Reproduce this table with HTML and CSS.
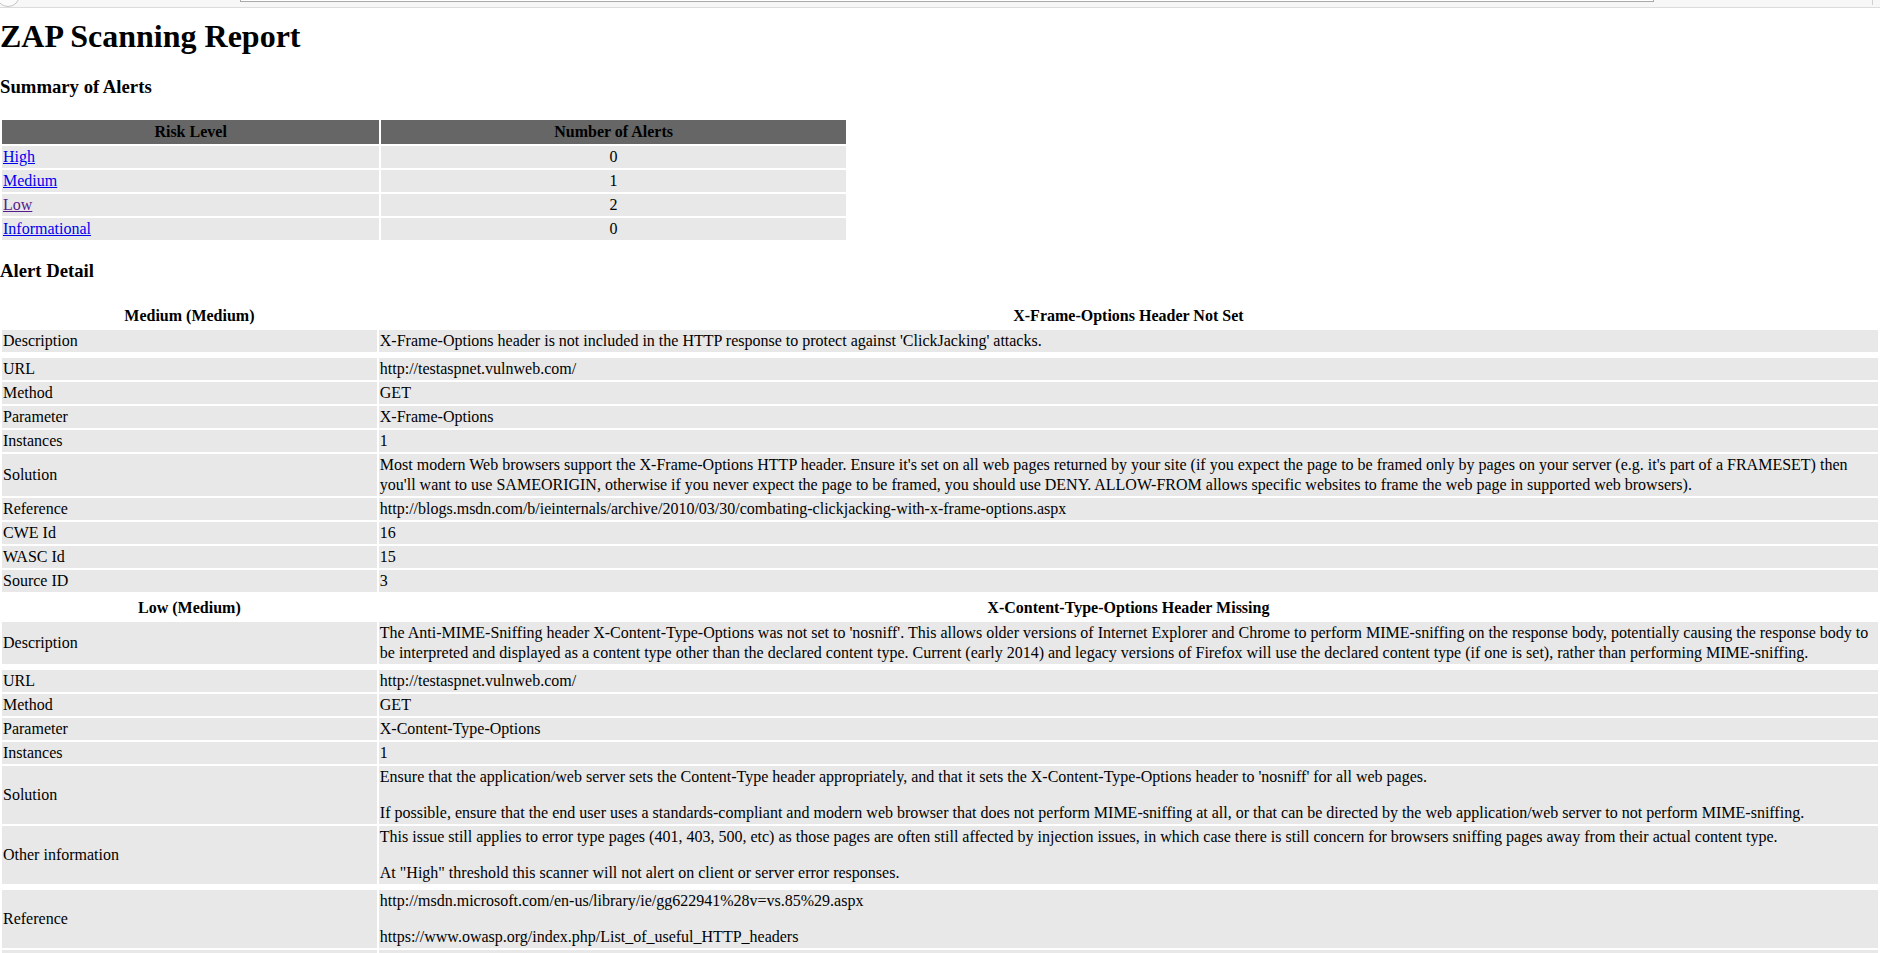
FILE: index.html
```html
<!DOCTYPE html>
<html>
<head>
<meta charset="utf-8">
<title>ZAP Scanning Report</title>
<link rel="stylesheet" href="styles.css">
</head>
<body>
<div class="chrome">
  <span class="chrome-btn"></span>
  <span class="chrome-addr"></span>
  <span class="chrome-sep"></span>
</div>
<div class="report">
  <h1 class="title">ZAP Scanning Report</h1>
  <h3 class="section">Summary of Alerts</h3>
  <table class="summary">
    <tr>
      <th class="summary-head col-risk">Risk Level</th>
      <th class="summary-head col-count">Number of Alerts</th>
    </tr>
    <tr class="row"><td class="cell"><a class="link" href="#high">High</a></td><td class="cell center">0</td></tr>
    <tr class="row"><td class="cell"><a class="link" href="#medium">Medium</a></td><td class="cell center">1</td></tr>
    <tr class="row"><td class="cell"><a class="link visited" href="#low">Low</a></td><td class="cell center">2</td></tr>
    <tr class="row"><td class="cell"><a class="link" href="#info">Informational</a></td><td class="cell center">0</td></tr>
  </table>
  <h3 class="section detail-title">Alert Detail</h3>

  <table class="results">
    <tr>
      <th class="risk-head col-label"><a id="medium"></a>Medium (Medium)</th>
      <th class="risk-head">X-Frame-Options Header Not Set</th>
    </tr>
    <tr class="row"><td class="cell">Description</td><td class="cell"><p class="p">X-Frame-Options header is not included in the HTTP response to protect against 'ClickJacking' attacks.</p></td></tr>
    <tr><td class="cell" colspan="2"></td></tr>
    <tr class="row"><td class="cell">URL</td><td class="cell">http://testaspnet.vulnweb.com/</td></tr>
    <tr class="row"><td class="cell">Method</td><td class="cell">GET</td></tr>
    <tr class="row"><td class="cell">Parameter</td><td class="cell">X-Frame-Options</td></tr>
    <tr class="row"><td class="cell">Instances</td><td class="cell">1</td></tr>
    <tr class="row"><td class="cell">Solution</td><td class="cell"><p class="p">Most modern Web browsers support the X-Frame-Options HTTP header. Ensure it's set on all web pages returned by your site (if you expect the page to be framed only by pages on your server (e.g. it's part of a FRAMESET) then you'll want to use SAMEORIGIN, otherwise if you never expect the page to be framed, you should use DENY. ALLOW-FROM allows specific websites to frame the web page in supported web browsers).</p></td></tr>
    <tr class="row"><td class="cell">Reference</td><td class="cell"><p class="p">http://blogs.msdn.com/b/ieinternals/archive/2010/03/30/combating-clickjacking-with-x-frame-options.aspx</p></td></tr>
    <tr class="row"><td class="cell">CWE Id</td><td class="cell">16</td></tr>
    <tr class="row"><td class="cell">WASC Id</td><td class="cell">15</td></tr>
    <tr class="row"><td class="cell">Source ID</td><td class="cell">3</td></tr>
  </table>

  <table class="results">
    <tr>
      <th class="risk-head col-label"><a id="low"></a>Low (Medium)</th>
      <th class="risk-head">X-Content-Type-Options Header Missing</th>
    </tr>
    <tr class="row"><td class="cell">Description</td><td class="cell"><p class="p">The Anti-MIME-Sniffing header X-Content-Type-Options was not set to 'nosniff'. This allows older versions of Internet Explorer and Chrome to perform MIME-sniffing on the response body, potentially causing the response body to be interpreted and displayed as a content type other than the declared content type. Current (early 2014) and legacy versions of Firefox will use the declared content type (if one is set), rather than performing MIME-sniffing.</p></td></tr>
    <tr><td class="cell" colspan="2"></td></tr>
    <tr class="row"><td class="cell">URL</td><td class="cell">http://testaspnet.vulnweb.com/</td></tr>
    <tr class="row"><td class="cell">Method</td><td class="cell">GET</td></tr>
    <tr class="row"><td class="cell">Parameter</td><td class="cell">X-Content-Type-Options</td></tr>
    <tr class="row"><td class="cell">Instances</td><td class="cell">1</td></tr>
    <tr class="row"><td class="cell">Solution</td><td class="cell"><p class="p">Ensure that the application/web server sets the Content-Type header appropriately, and that it sets the X-Content-Type-Options header to 'nosniff' for all web pages.</p><p class="p">If possible, ensure that the end user uses a standards-compliant and modern web browser that does not perform MIME-sniffing at all, or that can be directed by the web application/web server to not perform MIME-sniffing.</p></td></tr>
    <tr class="row"><td class="cell">Other information</td><td class="cell"><p class="p">This issue still applies to error type pages (401, 403, 500, etc) as those pages are often still affected by injection issues, in which case there is still concern for browsers sniffing pages away from their actual content type.</p><p class="p">At "High" threshold this scanner will not alert on client or server error responses.</p></td></tr>
    <tr><td class="cell" colspan="2"></td></tr>
    <tr class="row"><td class="cell">Reference</td><td class="cell"><p class="p">http://msdn.microsoft.com/en-us/library/ie/gg622941%28v=vs.85%29.aspx</p><p class="p">https://www.owasp.org/index.php/List_of_useful_HTTP_headers</p></td></tr>
    <tr class="row"><td class="cell">CWE Id</td><td class="cell">16</td></tr>
    <tr class="row"><td class="cell">WASC Id</td><td class="cell">15</td></tr>
    <tr class="row"><td class="cell">Source ID</td><td class="cell">3</td></tr>
  </table>

  <table class="results">
    <tr>
      <th class="risk-head col-label">Low (Medium)</th>
      <th class="risk-head">Web Browser XSS Protection Not Enabled</th>
    </tr>
    <tr class="row"><td class="cell">Description</td><td class="cell"><p class="p">Web Browser XSS Protection is not enabled, or is disabled by the configuration of the 'X-XSS-Protection' HTTP response header on the web server</p></td></tr>
    <tr><td class="cell" colspan="2"></td></tr>
    <tr class="row"><td class="cell">URL</td><td class="cell">http://testaspnet.vulnweb.com/</td></tr>
    <tr class="row"><td class="cell">Method</td><td class="cell">GET</td></tr>
    <tr class="row"><td class="cell">Parameter</td><td class="cell">X-XSS-Protection</td></tr>
    <tr class="row"><td class="cell">Instances</td><td class="cell">1</td></tr>
    <tr class="row"><td class="cell">Solution</td><td class="cell"><p class="p">Ensure that the web browser's XSS filter is enabled, by setting the X-XSS-Protection HTTP response header to '1'.</p></td></tr>
    <tr class="row"><td class="cell">Reference</td><td class="cell"><p class="p">https://www.owasp.org/index.php/XSS_(Cross_Site_Scripting)_Prevention_Cheat_Sheet</p></td></tr>
    <tr class="row"><td class="cell">CWE Id</td><td class="cell">933</td></tr>
    <tr class="row"><td class="cell">WASC Id</td><td class="cell">14</td></tr>
    <tr class="row"><td class="cell">Source ID</td><td class="cell">3</td></tr>
  </table>
</div>
</body>
</html>
```

FILE: styles.css
```css
html, body {
  margin: 0;
  padding: 0;
  background: #ffffff;
}

body {
  font-family: "Liberation Serif", "Times New Roman", serif;
  font-size: 16px;
  color: #000000;
}

/* remnant of the browser toolbar at the very top */
.chrome {
  display: flex;
  align-items: flex-start;
  height: 7px;
  overflow: hidden;
  background: #f7f7f7;
  border-bottom: 1px solid #dcdcdc;
}

.chrome-btn {
  flex: none;
  width: 22px;
  height: 22px;
  margin: -17px 0 0 -4px;
  border: 1px solid #c4c4c4;
  border-radius: 50%;
  background: #fbfbfb;
}

.chrome-addr {
  flex: none;
  width: 1412px;
  height: 1px;
  margin-left: 220px;
  border: 1px solid #a9a9a9;
  border-top: none;
  background: #ffffff;
}

.chrome-sep {
  flex: none;
  width: 1px;
  height: 5px;
  margin-left: auto;
  margin-right: 7px;
  background: #cfcfcf;
}

.report {
  display: block;
}

.title {
  margin: 10px 0 21px;
  font-size: 32px;
  line-height: 37px;
  font-weight: bold;
}

.section {
  margin: 19px 0 20px;
  font-size: 18.72px;
  line-height: 22px;
  font-weight: bold;
}

.detail-title {
  margin-top: 18px;
}

.summary {
  width: 848px;
  border-spacing: 2px;
  border-collapse: separate;
}

.results {
  width: 100%;
  border-spacing: 2px;
  border-collapse: separate;
}

.summary-head {
  height: 22px;
  padding: 1px;
  background: #666666;
  font-weight: bold;
  line-height: 20px;
  text-align: center;
}

.col-risk { width: 44.8%; }
.col-count { width: 55.2%; }
.col-label { width: 20%; }

.risk-head {
  height: 22px;
  padding: 1px;
  font-weight: bold;
  line-height: 20px;
  text-align: center;
  background: #ffffff;
}

.row {
  background: #e8e8e8;
}

.cell {
  padding: 1px;
  line-height: 20px;
  vertical-align: middle;
  text-align: left;
}

.center {
  text-align: center;
}

.p {
  margin: 0;
}

.p + .p {
  margin-top: 16px;
}

.link {
  color: #0000ee;
  text-decoration: underline;
}

.link.visited {
  color: #551a8b;
}
```
